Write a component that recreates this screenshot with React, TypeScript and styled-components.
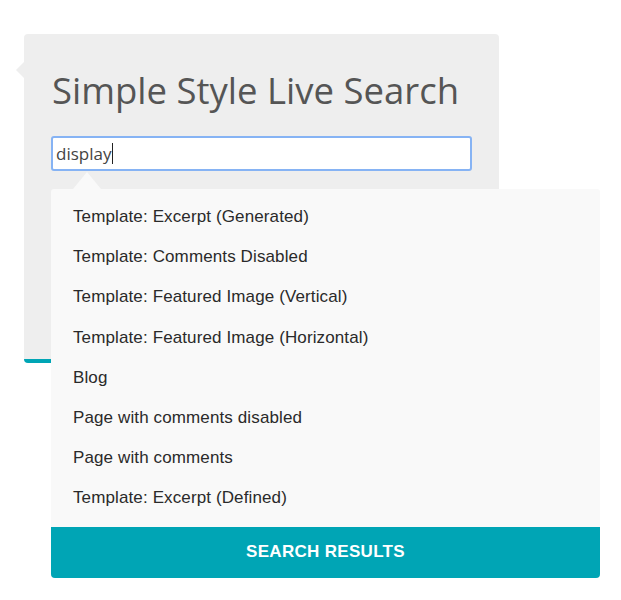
import React from "react";
import styled, { createGlobalStyle } from "styled-components";

const Global = createGlobalStyle`
  html, body { margin: 0; padding: 0; background: #ffffff; }
  body { font-family: "Open Sans", sans-serif; }
`;

const Page = styled.div`
  padding: 34px 0 0 24px;
  height: 600px;
  box-sizing: border-box;
`;

const Card = styled.section`
  position: relative;
  width: 475px;
  height: 329px;
  box-sizing: border-box;
  background: #eeeeee;
  border-radius: 4px;
  border-bottom: 4px solid #00a5b5;
  padding: 32px 27px 0 27px;
  &::before {
    content: "";
    position: absolute;
    left: -8px;
    top: 28px;
    border-style: solid;
    border-width: 8px 8px 8px 0;
    border-color: transparent #eeeeee transparent transparent;
  }
`;

const Title = styled.h1`
  margin: 0 0 0 1px;
  font-family: "Open Sans", sans-serif;
  font-weight: 400;
  font-size: 36.5px;
  line-height: 49px;
  color: #555555;
`;

const Field = styled.div`
  position: relative;
  margin-top: 21px;
  width: 421px;
`;

const Input = styled.div`
  box-sizing: border-box;
  height: 35px;
  border: 2px solid #86b3f4;
  border-radius: 3px;
  background: #ffffff;
  padding: 0 3px;
  display: flex;
  align-items: center;
  font-family: "Open Sans", sans-serif;
  font-size: 17px;
  color: #444444;
`;

const Caret = styled.span`
  display: inline-block;
  width: 1px;
  height: 21px;
  background: #222;
  margin-left: 1px;
`;

const Dropdown = styled.div`
  position: absolute;
  left: 0;
  top: 53px;
  width: 549px;
  background: #f9f9f9;
  border-radius: 3px;
  display: flex;
  flex-direction: column;
  z-index: 2;
  &::before {
    content: "";
    position: absolute;
    left: 22px;
    top: -17px;
    border-style: solid;
    border-width: 0 14px 17px 14px;
    border-color: transparent transparent #f9f9f9 transparent;
  }
`;

const List = styled.ul`
  list-style: none;
  margin: 0;
  padding: 8px 0 8px 0;
`;

const Item = styled.li`
  padding: 0 22px;
  height: 40.2px;
  display: flex;
  align-items: center;
  font-family: "Liberation Sans", Arial, sans-serif;
  font-size: 17px;
  letter-spacing: 0.12px;
  color: #2a2a2a;
`;

const Button = styled.button`
  height: 51px;
  border: none;
  border-radius: 0 0 4px 4px;
  background: #00a5b5;
  color: #ffffff;
  font-family: "Liberation Sans", Arial, sans-serif;
  font-weight: 700;
  font-size: 17px;
  letter-spacing: 0.3px;
  cursor: pointer;
`;

const results = [
  "Template: Excerpt (Generated)",
  "Template: Comments Disabled",
  "Template: Featured Image (Vertical)",
  "Template: Featured Image (Horizontal)",
  "Blog",
  "Page with comments disabled",
  "Page with comments",
  "Template: Excerpt (Defined)",
];

export default function App() {
  return (
    <>
      <Global />
      <Page>
        <Card>
          <Title>Simple Style Live Search</Title>
          <Field>
            <Input>
              display<Caret />
            </Input>
            <Dropdown>
              <List>
                {results.map((r) => (
                  <Item key={r}>{r}</Item>
                ))}
              </List>
              <Button>SEARCH RESULTS</Button>
            </Dropdown>
          </Field>
        </Card>
      </Page>
    </>
  );
}
